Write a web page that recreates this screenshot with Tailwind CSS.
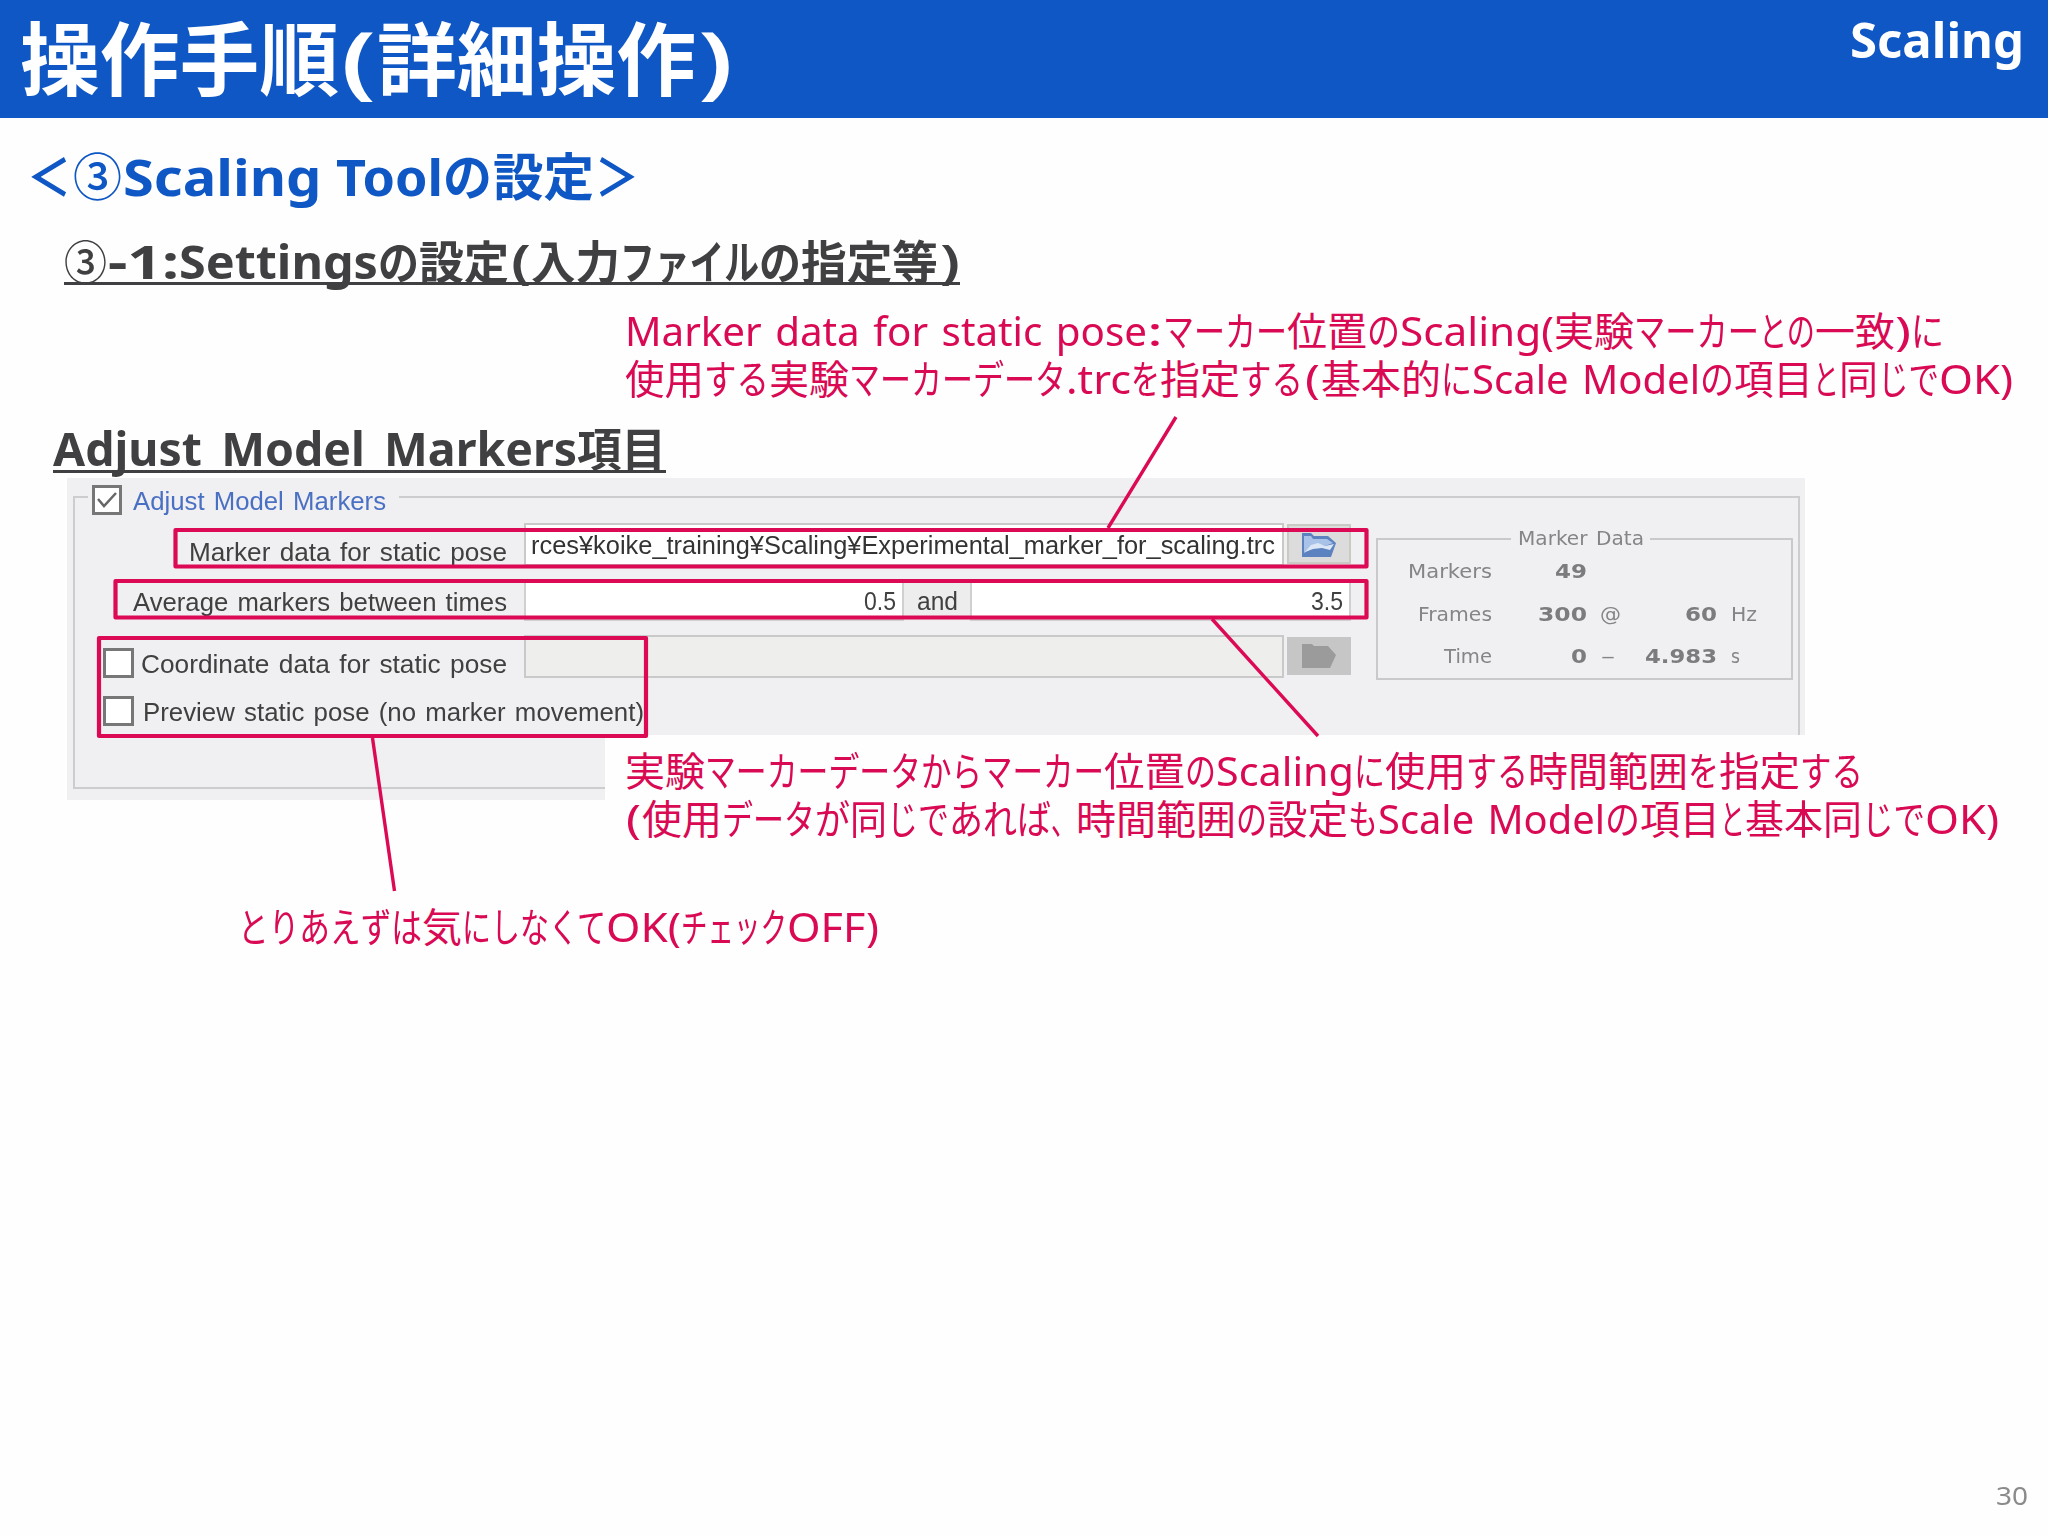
<!DOCTYPE html>
<html lang="ja">
<head>
  <meta charset="UTF-8" />
  <meta name="viewport" content="width=device-width, initial-scale=1" />
  <title>操作手順(詳細操作) - Scaling</title>
  <script src="https://cdn.jsdelivr.net/npm/@tailwindcss/browser@4"></script>
</head>
<body class="bg-[#fefefe]">
  <div class="relative w-[2048px] h-[1536px] overflow-hidden font-['Noto_Sans','Noto_Sans_CJK_JP',sans-serif] text-[#403f41]">

    <header class="flex justify-between h-[118px] bg-[#0e57c5] text-white font-bold pl-5 pr-[24px]">
      <h1 class="flex whitespace-pre text-[80px] leading-[80px] pt-[18px]"><span data-w="319">操作手順</span><span data-w="35" class="ml-[2px] font-semibold">(</span><span data-w="319" class="ml-px">詳細操作</span><span data-w="35" class="ml-[2px] font-semibold">)</span></h1>
      <div class="flex text-[48px] leading-[48px] pt-[16px]"><span data-w="174">Scaling</span></div>
    </header>

    <h2 class="flex whitespace-pre mt-[28px] ml-[27px] text-[51px] leading-[60px] font-bold text-[#0e57c5]"><span data-w="44">＜</span><span data-w="49" class="ml-[2px] font-medium">③</span><span data-w="213" class="ml-px">Scaling </span><span data-w="107">Tool</span><span data-w="49">の</span><span data-w="101" class="ml-px">設定</span><span data-w="44" class="ml-px">＞</span></h2>

    <h3 class="flex whitespace-pre w-[896px] mt-[30px] ml-[64px] h-[49px] text-[46px] leading-[50px] font-bold border-b-3 border-[#403f41]"><span data-w="43" class="font-medium">③</span><span data-w="71" class="ml-px">-1:</span><span data-w="199">Settings</span><span data-w="41">の</span><span data-w="90">設定</span><span data-w="20" class="ml-[2px] font-semibold">(</span><span data-w="89">入力</span><span data-w="139">ファイル</span><span data-w="42">の</span><span data-w="137">指定等</span><span data-w="20" class="ml-[2px] font-semibold">)</span></h3>

    <h3 class="flex whitespace-pre w-[613px] mt-[139px] ml-[53px] h-[49px] text-[46px] leading-[48px] font-bold border-b-3 border-[#403f41]"><span data-w="524" class="[word-spacing:7px]">Adjust Model Markers</span><span data-w="89">項目</span></h3>

    <!-- settings panel -->
    <section class="w-[1738px] h-[322px] mt-[5px] ml-[67px] pt-[18px] pl-[6px] bg-[#f0eff1] blur-[0.7px] font-['Liberation_Sans',sans-serif] text-[25px] leading-[30px] [word-spacing:2px] text-[#404040]">
      <div class="w-[1727px] h-[293px] border-[2.5px] border-[#cdcdcf]">
        <div class="flex items-center gap-[11px] -mt-[16px] ml-[13px] w-[311px] h-[36px] pl-1 bg-[#f0eff1]">
          <svg class="w-[30px] h-[30px]" viewBox="0 0 30 30" fill="none"><rect x="1.5" y="1.5" width="27" height="27" fill="#fff" stroke="#777" stroke-width="3"/><path d="M6 14l6 7L24 8" stroke="#666" stroke-width="2.5"/></svg>
          <span data-w="253" class="text-[#4a70c4] pt-[2px]">Adjust Model Markers</span>
        </div>

        <div class="flex">
          <div class="w-[1276px] pt-[5px]">
            <div class="flex h-[43px]">
              <div class="flex justify-end w-[432px] pt-[14px]"><span data-w="318">Marker data for static pose</span></div>
              <div class="flex items-center w-[760px] ml-[17px] px-[5px] border-2 border-[#c9c9c9] bg-white text-[#333]"><span data-w="744">rces¥koike_training¥Scaling¥Experimental_marker_for_scaling.trc</span></div>
              <div class="flex items-center justify-center w-[64px] h-[40px] ml-[3px] mt-[1px] border-2 border-[#cac9c4] bg-[#dcdcdc]">
                <svg class="w-[36px] h-[27px]" viewBox="0 0 36 27"><path d="M1 26V2h9l3 3h14l8 7-5 14z" fill="#5d82c0"/><path d="M3 5h7l2 3h14l6 4-8 3-9-2-5 5-7 4z" fill="#a9c2e8"/><path d="M4 21l6-7 7-2 7 3 9-2-4 6-8-2-9 1z" fill="#dbe7f7"/></svg>
              </div>
            </div>
            <div class="flex h-[40px] mt-[15px]">
              <div class="flex justify-end w-[432px] pt-[6px]"><span data-w="374">Average markers between times</span></div>
              <div class="flex justify-end items-center w-[380px] ml-[17px] pr-[6px] border-2 border-[#d0d0d0] bg-white"><span data-w="32">0.5</span></div>
              <div class="flex justify-center items-center w-[66px] bg-[#ededed]"><span data-w="41">and</span></div>
              <div class="flex justify-end items-center w-[381px] pr-[6px] border-2 border-[#d0d0d0] bg-white"><span data-w="32">3.5</span></div>
            </div>
            <div class="flex h-[43px] mt-[14px]">
              <div class="flex items-start justify-between w-[432px] pl-[28px] pt-[13px]"><div class="w-[31px] h-[30px] border-3 border-[#777] bg-white"></div><span data-w="366" class="mt-px">Coordinate data for static pose</span></div>
              <div class="w-[760px] ml-[17px] border-2 border-[#c9c9c9] bg-[#eeeeed]"></div>
              <div class="flex items-center justify-center w-[64px] h-[38px] ml-[3px] mt-[2px] bg-[#c6c6c6]">
                <svg class="w-[36px] h-[24px]" viewBox="0 0 36 24"><path d="M1 0h10l2 2h14l8 9-6 13H1z" fill="#9b9b9b"/></svg>
              </div>
            </div>
            <div class="flex items-start gap-[9px] pl-[28px] mt-[18px]"><div class="w-[31px] h-[30px] border-3 border-[#777] bg-white"></div><span data-w="501" class="mt-px">Preview static pose (no marker movement)</span></div>
          </div>

          <div class="w-[417px] h-[142px] mt-[20px] ml-[25px] border-2 border-[#c9c9cb] font-['DejaVu_Sans',sans-serif] text-[19px] leading-[24px] text-[#858587]">
            <div class="flex justify-center -mt-[14px] ml-[133px] w-[139px] h-[24px] bg-[#f0eff1]"><span data-w="126">Marker Data</span></div>
            <div class="grid grid-cols-[114px_95px_48px_82px_60px] auto-rows-[42.5px] items-center">
              <div class="flex justify-end"><span data-w="84">Markers</span></div>
              <div class="flex justify-end font-bold text-[#7c7c7e]"><span data-w="32">49</span></div>
              <div></div><div></div><div></div>
              <div class="flex justify-end"><span data-w="74">Frames</span></div>
              <div class="flex justify-end font-bold text-[#7c7c7e]"><span data-w="49">300</span></div>
              <div class="pl-[13px]"><span data-w="21">@</span></div>
              <div class="flex justify-end font-bold text-[#7c7c7e]"><span data-w="32">60</span></div>
              <div class="pl-[14px]"><span data-w="26">Hz</span></div>
              <div class="flex justify-end"><span data-w="48">Time</span></div>
              <div class="flex justify-end font-bold text-[#7c7c7e]"><span data-w="16">0</span></div>
              <div class="pl-[14px]"><span data-w="14">–</span></div>
              <div class="flex justify-end font-bold text-[#7c7c7e]"><span data-w="72">4.983</span></div>
              <div class="pl-[14px]"><span data-w="9">s</span></div>
            </div>
          </div>
        </div>
      </div>
    </section>

    <!-- callout texts -->
    <div class="absolute left-[625px] top-[307px] text-[40px] leading-[47.7px] [word-spacing:3px] text-[#d90953]">
      <p class="flex whitespace-pre"><span data-w="522">Marker data for static pose</span><span data-w="16">:</span><span data-w="124">マーカー</span><span data-w="80">位置</span><span data-w="33">の</span><span data-w="154">Scaling(</span><span data-w="80">実験</span><span data-w="125">マーカー</span><span data-w="56">との</span><span data-w="80">一致</span><span data-w="16">)</span><span data-w="33">に</span></p>
      <p class="flex whitespace-pre"><span data-w="79">使用</span><span data-w="65">する</span><span data-w="80">実験</span><span data-w="217">マーカーデータ</span><span data-w="65">.trc</span><span data-w="29">を</span><span data-w="80">指定</span><span data-w="63">する</span><span data-w="15" class="ml-[2px]">(</span><span data-w="120" class="ml-px">基本的</span><span data-w="31">に</span><span data-w="228">Scale Model</span><span data-w="34">の</span><span data-w="79">項目</span><span data-w="26">と</span><span data-w="39">同</span><span data-w="61">じで</span><span data-w="74">OK)</span></p>
    </div>

    <div class="absolute left-[605px] top-[735px] w-[1443px] h-[110px] pl-[20px] pt-[12px] bg-[#fefefe] text-[40px] leading-[47.7px] [word-spacing:3px] text-[#d90953]">
      <p class="flex whitespace-pre"><span data-w="80">実験</span><span data-w="216">マーカーデータ</span><span data-w="61">から</span><span data-w="122">マーカー</span><span data-w="81">位置</span><span data-w="31">の</span><span data-w="138">Scaling</span><span data-w="31">に</span><span data-w="81">使用</span><span data-w="62">する</span><span data-w="160">時間範囲</span><span data-w="31">を</span><span data-w="81">指定</span><span data-w="63">する</span></p>
      <p class="flex whitespace-pre"><span data-w="15" class="ml-px">(</span><span data-w="80" class="ml-px">使用</span><span data-w="93">データ</span><span data-w="35">が</span><span data-w="37">同</span><span data-w="62">じで</span><span data-w="102">あれば</span><span data-w="25">、</span><span data-w="160">時間範囲</span><span data-w="31">の</span><span data-w="81">設定</span><span data-w="30">も</span><span data-w="227">Scale Model</span><span data-w="35">の</span><span data-w="80">項目</span><span data-w="25">と</span><span data-w="117">基本同</span><span data-w="63">じで</span><span data-w="74">OK)</span></p>
    </div>

    <p class="absolute left-[238px] top-[903px] flex whitespace-pre text-[40px] leading-[48px] text-[#d90953]"><span data-w="184">とりあえずは</span><span data-w="40">気</span><span data-w="144">にしなくて</span><span data-w="75">OK(</span><span data-w="106">チェック</span><span data-w="92">OFF)</span></p>

    <!-- callout frames and leader lines -->
    <svg class="absolute left-0 top-0 w-[2048px] h-[1000px]" viewBox="0 0 2048 1000" fill="none" stroke="#dc0a55" stroke-width="4.2" stroke-linejoin="round">
      <rect x="175.5" y="530" width="1191" height="36.5"/>
      <rect x="115.5" y="581" width="1251" height="36.5"/>
      <rect x="99" y="638" width="547" height="98"/>
      <path d="M1176 417L1108 528M1212 619L1318 736M372.500 738L394.500 891" stroke-width="3.4"/>
    </svg>

    <div class="absolute right-[20px] top-[1479px] flex text-[26px] leading-[32px] text-[#8b8b8b]"><span data-w="32">30</span></div>
  </div>

  <script>
    // squeeze or stretch each run of text to its set width
    const fitter = new ResizeObserver((entries) => {
      entries.forEach(({ target, contentRect }) => {
        const natural = contentRect.width;
        if (!natural) return;
        const width = parseFloat(target.dataset.w);
        target.style.transform = 'scaleX(' + width / natural + ')';
        target.style.marginRight = (width - natural) + 'px';
      });
    });

    document.querySelectorAll('[data-w]').forEach((el) => {
      el.style.display = 'inline-block';
      el.style.flexShrink = '0';
      el.style.whiteSpace = 'pre';
      el.style.transformOrigin = '0 50%';
      fitter.observe(el);
    });
  </script>
</body>
</html>
